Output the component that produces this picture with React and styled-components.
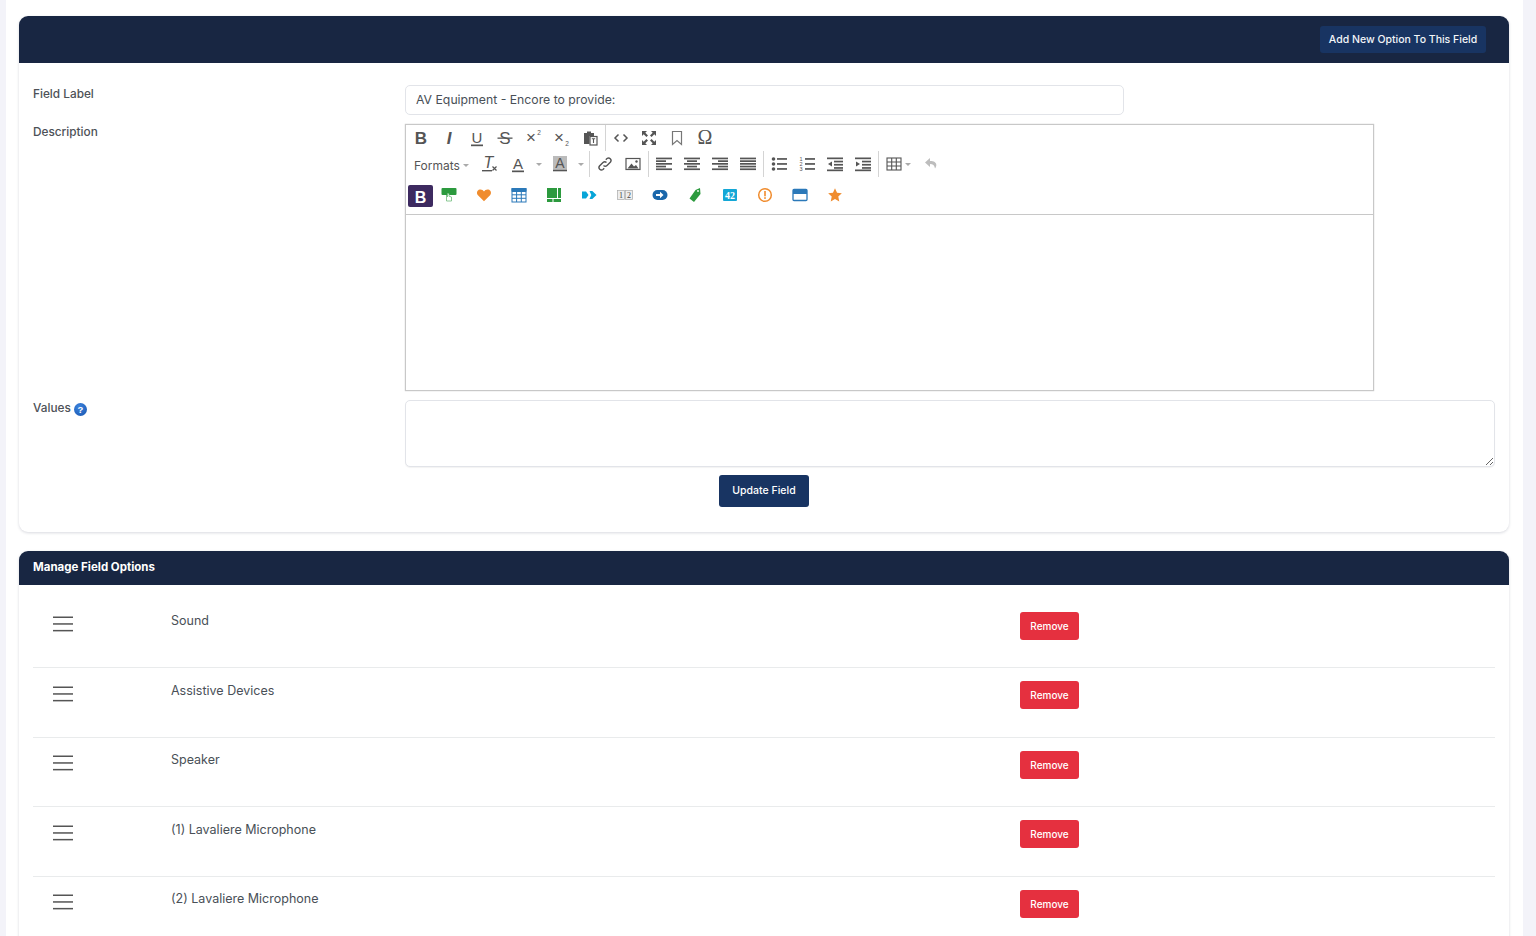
import styled, { createGlobalStyle } from "styled-components";

const GlobalStyle = createGlobalStyle`
  html, body {
    margin: 0;
    height: 936px;
    overflow: hidden;
    background: #f3f3f9;
    font-family: Inter, "Liberation Sans", sans-serif;
  }
  * { box-sizing: border-box; }
`

const ink = "#555"

const Lines = ({ rows }) => (
  <svg width="16" height="16" viewBox="0 0 16 16">
    {rows.map(([x1, x2], i) => (
      <rect key={i} x={x1} y={1.6 + i * 2.7} width={x2 - x1} height="1.7" fill={ink} />
    ))}
  </svg>
)

const Letter = ({ children, size = 17, weight = 400, italic, family = "Liberation Sans", color = ink, bar, strike, y = 15 }) => (
  <svg width="24" height="24" viewBox="-3 -3 24 24">
    <text x="9" y={y} textAnchor="middle" fontFamily={family} fontSize={size} fontWeight={weight} fontStyle={italic ? "italic" : "normal"} fill={color}>{children}</text>
    {bar && <rect x="3" y="15.500" width="12" height="1.700" fill={color} />}
    {strike && <rect x="1.500" y="8.500" width="15" height="1.300" fill={color} />}
  </svg>
)

const Script = ({ sup }) => (
  <svg width="22" height="22" viewBox="-2 -2 22 22">
    <text x="7" y="14" textAnchor="middle" fontFamily="Liberation Sans" fontSize="17" fill={ink}>×</text>
    <text x="15" y={sup ? 6 : 17} textAnchor="middle" fontFamily="Liberation Sans" fontSize="6.500" fill={ink}>2</text>
  </svg>
)

const PasteIcon = () => (
  <svg width="16" height="16" viewBox="0 0 16 16">
    <path d="M2 3h3V1.500h4V3h3v3H7.500v8H2z" fill={ink} />
    <rect x="8" y="6.500" width="7" height="8.500" fill="#fff" stroke={ink} strokeWidth="1.200" />
    <path d="M9.800 8.800h3.400M11.500 8.800v4.200" stroke={ink} strokeWidth="1.100" fill="none" />
  </svg>
)

const CodeIcon = () => (
  <svg width="16" height="16" viewBox="0 0 16 16" fill="none" stroke={ink} strokeWidth="1.500">
    <path d="M5.500 4.500 2 8l3.500 3.500M10.500 4.500 14 8l-3.500 3.500" />
  </svg>
)

const FullscreenIcon = () => (
  <svg width="16" height="16" viewBox="0 0 16 16" fill={ink}>
    <path d="M1 1h5L4.300 2.700 7 5.400 5.400 7 2.700 4.300 1 6zM15 1v5l-1.700-1.700L10.600 7 9 5.400l2.700-2.700L10 1zM1 15v-5l1.700 1.700L5.400 9 7 10.600l-2.700 2.700L6 15zM15 15h-5l1.700-1.700L9 10.600 10.600 9l2.700 2.700L15 10z" />
  </svg>
)

const BookmarkIcon = () => (
  <svg width="16" height="16" viewBox="0 0 16 16" fill="none" stroke="#777" strokeWidth="1.200">
    <path d="M3.500 1.500h9v13L8 10.500l-4.500 4z" />
  </svg>
)

const ClearIcon = () => (
  <svg width="20" height="20" viewBox="-1 -1 20 20">
    <text x="7.500" y="13" textAnchor="middle" fontFamily="Liberation Sans" fontSize="16" fontStyle="italic" fill={ink}>T</text>
    <rect x="1" y="15" width="10" height="1.400" fill={ink} />
    <path d="M11.500 11.500l4 4M15.500 11.500l-4 4" stroke={ink} strokeWidth="1.200" />
  </svg>
)

const BackColorIcon = () => (
  <svg width="18" height="18" viewBox="0 0 18 18">
    <rect x="2" y="1" width="14" height="13" fill="#bbb" />
    <text x="9" y="12.500" textAnchor="middle" fontFamily="Liberation Sans" fontSize="14" fill={ink}>A</text>
    <rect x="2" y="14.500" width="14" height="1.800" fill={ink} />
  </svg>
)

const LinkIcon = () => (
  <svg width="16" height="16" viewBox="0 0 16 16" fill="none" stroke={ink} strokeWidth="1.400">
    <path d="M6.500 9.500a2.500 2.500 0 0 0 3.500 0l3.500-3.500a2.500 2.500 0 0 0-3.500-3.500L8.800 3.700" />
    <path d="M9.500 6.500a2.500 2.500 0 0 0-3.500 0L2.500 10A2.500 2.500 0 0 0 6 13.500l1.200-1.200" />
  </svg>
)

const ImageIcon = () => (
  <svg width="16" height="16" viewBox="0 0 16 16">
    <rect x="1" y="2.500" width="14" height="11" fill="#fff" stroke={ink} strokeWidth="1.200" />
    <path d="M2.500 12.500l4-5 2.500 3 2-1.500 2.500 3.500z" fill={ink} />
    <circle cx="11.500" cy="5.500" r="1.200" fill={ink} />
  </svg>
)

const BulletIcon = () => (
  <svg width="16" height="16" viewBox="0 0 16 16" fill={ink}>
    <circle cx="2.500" cy="3" r="1.800" /><circle cx="2.500" cy="8" r="1.800" /><circle cx="2.500" cy="13" r="1.800" />
    <rect x="6" y="2.100" width="10" height="1.700" /><rect x="6" y="7.100" width="10" height="1.700" /><rect x="6" y="12.100" width="10" height="1.700" />
  </svg>
)

const NumberIcon = () => (
  <svg width="16" height="16" viewBox="0 0 16 16" fill={ink}>
    <text x="0.500" y="5" fontFamily="Liberation Sans" fontSize="5.500">1</text>
    <text x="0.500" y="10" fontFamily="Liberation Sans" fontSize="5.500">2</text>
    <text x="0.500" y="15" fontFamily="Liberation Sans" fontSize="5.500">3</text>
    <rect x="6" y="2.100" width="10" height="1.700" /><rect x="6" y="7.100" width="10" height="1.700" /><rect x="6" y="12.100" width="10" height="1.700" />
  </svg>
)

const IndentIcon = ({ out }) => (
  <svg width="16" height="16" viewBox="0 0 16 16" fill={ink}>
    <rect x="0" y="1.500" width="16" height="1.700" /><rect x="7" y="4.700" width="9" height="1.700" />
    <rect x="7" y="7.900" width="9" height="1.700" /><rect x="7" y="11.100" width="9" height="1.700" />
    <rect x="0" y="13.500" width="16" height="1.700" />
    <path d={out ? "M5 5.500v5L1 8z" : "M1 5.500v5L5 8z"} />
  </svg>
)

const TableIcon = () => (
  <svg width="16" height="16" viewBox="0 0 16 16" fill="none" stroke={ink} strokeWidth="1.100">
    <rect x="1" y="2" width="14" height="12" />
    <path d="M5.700 2v12M10.300 2v12M1 6h14M1 10h14" />
  </svg>
)

const UndoIcon = () => (
  <svg width="16" height="16" viewBox="0 0 16 16" fill="#bdbdbd">
    <path d="M7 2 2 6.500 7 11V8c3 0 4.500 1.200 5 4.500.8-1 1.300-2.200 1.300-3.500C13.300 6.500 11 5 7 5z" />
  </svg>
)

const HandButtonIcon = () => (
  <svg width="18" height="18" viewBox="0 0 18 18">
    <rect x="1.500" y="2" width="15" height="7" rx="1" fill="#2c9a3e" />
    <path d="M6.500 9v6h5v-4l-2.500-.8V7.500H7.500V11z" fill="#fff" stroke="#6dbb7a" strokeWidth="0.800" />
  </svg>
)

const HeartIcon = () => (
  <svg width="16" height="16" viewBox="0 0 18 18">
    <path d="M9 16 2.200 9.300C.2 7.200 1 3.500 4.200 2.800 6.200 2.400 8 3.400 9 5c1-1.600 2.800-2.600 4.800-2.200 3.200.7 4 4.400 2 6.500z" fill="#f08c2e" />
  </svg>
)

const GridIcon = () => (
  <svg width="16" height="16" viewBox="0 0 16 16" fill="none" stroke="#2b79b9" strokeWidth="1">
    <rect x="1" y="1.500" width="14" height="13.500" />
    <path d="M1 1.500h14v3H1z" fill="#2b79b9" />
    <path d="M5.600 4.500v10.500M10.300 4.500v10.500M1 7.800h14M1 11.300h14" />
  </svg>
)

const LayoutIcon = () => (
  <svg width="16" height="16" viewBox="0 0 16 16" fill="#2c9a3e">
    <rect x="1" y="1" width="10" height="10" /><rect x="12" y="1" width="3" height="10" />
    <rect x="1" y="12" width="5.500" height="3" /><rect x="7.500" y="12" width="7.500" height="3" />
  </svg>
)

const ChevronsIcon = () => (
  <svg width="16" height="16" viewBox="0 0 16 16" fill="#08a5d8">
    <path d="M1 4.500h4l2.500 3.500L5 11.500H1z" /><path d="M8.500 4h2.800l4.200 4-4.200 4H8.500l1.800-4z" />
  </svg>
)

const ColumnsIcon = () => (
  <svg width="16" height="16" viewBox="0 0 16 16">
    <rect x="0.500" y="3.500" width="7" height="9" fill="#eee" stroke="#aaa" strokeWidth="0.700" />
    <rect x="8.500" y="3.500" width="7" height="9" fill="#eee" stroke="#aaa" strokeWidth="0.700" />
    <text x="4" y="11" textAnchor="middle" fontFamily="Liberation Serif" fontSize="8" fill="#444">1</text>
    <text x="12" y="11" textAnchor="middle" fontFamily="Liberation Serif" fontSize="8" fill="#444">2</text>
  </svg>
)

const ArrowPillIcon = () => (
  <svg width="16" height="16" viewBox="0 0 16 16">
    <rect x="0.500" y="3" width="15" height="10" rx="5" fill="#1a67ab" />
    <path d="M4 7h4V4.800L11.500 8 8 11.200V9H4z" fill="#fff" />
  </svg>
)

const TagIcon = () => (
  <svg width="16" height="16" viewBox="0 0 16 16">
    <path d="M13 1 13.500 7 7 15 2.500 11.500 8.500 3z" fill="#2c9a3e" />
    <circle cx="11" cy="4" r="0.900" fill="#fff" />
  </svg>
)

const BadgeIcon = () => (
  <svg width="16" height="16" viewBox="0 0 16 16">
    <rect x="1" y="2" width="14" height="12" rx="1" fill="#14a7d6" />
    <text x="8" y="11.500" textAnchor="middle" fontFamily="Liberation Serif" fontSize="10" fontWeight="700" fill="#fff">42</text>
  </svg>
)

const AlertIcon = () => (
  <svg width="16" height="16" viewBox="0 0 16 16">
    <circle cx="8" cy="8" r="6.300" fill="none" stroke="#f08c2e" strokeWidth="1.500" />
    <rect x="7.200" y="4" width="1.600" height="5.300" fill="#f08c2e" />
    <rect x="7.200" y="10.200" width="1.600" height="1.700" fill="#f08c2e" />
  </svg>
)

const PanelIcon = () => (
  <svg width="16" height="16" viewBox="0 0 16 16">
    <rect x="1" y="2.500" width="14" height="11" rx="1" fill="#fff" stroke="#2b79b9" strokeWidth="1.300" />
    <rect x="1" y="2.500" width="14" height="4.500" fill="#2b79b9" />
  </svg>
)

const StarIcon = () => (
  <svg width="16" height="16" viewBox="0 0 18 18">
    <path d="m9 1.500 2.300 5 5.400.6-4 3.700 1.100 5.400L9 13.500l-4.800 2.700 1.100-5.400-4-3.700 5.400-.6z" fill="#f08c2e" />
  </svg>
)

const snippets = [HandButtonIcon, HeartIcon, GridIcon, LayoutIcon, ChevronsIcon, ColumnsIcon, ArrowPillIcon, TagIcon, BadgeIcon, AlertIcon, PanelIcon, StarIcon]

const options = ["Sound", "Assistive Devices", "Speaker", "(1) Lavaliere Microphone", "(2) Lavaliere Microphone"]

export default function App() {
  return (
    <Page>
      <GlobalStyle />
      <Card>
        <FieldHeader>
          <HeaderButton>Add New Option To This Field</HeaderButton>
        </FieldHeader>
        <FieldForm>
          <Label $top={1}>Field Label</Label>
          <TextInput defaultValue="AV Equipment - Encore to provide:" />

          <Label>Description</Label>
          <Editor>
            <Toolbar>
              <ToolRow>
                <ToolBtn><Letter weight={700}>B</Letter></ToolBtn>
                <ToolBtn><Letter italic weight={700}>I</Letter></ToolBtn>
                <ToolBtn><Letter bar size={15} y={13.500}>U</Letter></ToolBtn>
                <ToolBtn><Letter strike>S</Letter></ToolBtn>
                <ToolBtn><Script sup /></ToolBtn>
                <ToolBtn><Script /></ToolBtn>
                <PasteBtn><PasteIcon /></PasteBtn>
                <Divider />
                <ToolBtn><CodeIcon /></ToolBtn>
                <ToolBtn><FullscreenIcon /></ToolBtn>
                <ToolBtn><BookmarkIcon /></ToolBtn>
                <ToolBtn><Letter size={20} y={15} family="Liberation Serif">Ω</Letter></ToolBtn>
              </ToolRow>
              <ToolRow>
                <FormatsBtn>Formats<Caret /></FormatsBtn>
                <ToolBtn><ClearIcon /></ToolBtn>
                <ToolBtn><Letter bar size={15} y={14}>A</Letter></ToolBtn>
                <CaretBtn><Caret /></CaretBtn>
                <ToolBtn><BackColorIcon /></ToolBtn>
                <CaretBtn><Caret /></CaretBtn>
                <Divider />
                <ToolBtn><LinkIcon /></ToolBtn>
                <ToolBtn><ImageIcon /></ToolBtn>
                <Divider />
                <ToolBtn><Lines rows={[[0, 16], [0, 10], [0, 16], [0, 10], [0, 16]]} /></ToolBtn>
                <ToolBtn><Lines rows={[[0, 16], [3, 13], [0, 16], [3, 13], [0, 16]]} /></ToolBtn>
                <ToolBtn><Lines rows={[[0, 16], [6, 16], [0, 16], [6, 16], [0, 16]]} /></ToolBtn>
                <ToolBtn><Lines rows={[[0, 16], [0, 16], [0, 16], [0, 16], [0, 16]]} /></ToolBtn>
                <Divider />
                <ToolBtn><BulletIcon /></ToolBtn>
                <ToolBtn><NumberIcon /></ToolBtn>
                <ToolBtn><IndentIcon out /></ToolBtn>
                <ToolBtn><IndentIcon /></ToolBtn>
                <Divider />
                <TableBtn><TableIcon /><Caret /></TableBtn>
                <ToolBtn><UndoIcon /></ToolBtn>
              </ToolRow>
              <SnippetRow>
                <BootstrapMark>B</BootstrapMark>
                {snippets.map((Icon, i) => <SnippetBtn key={i}><Icon /></SnippetBtn>)}
              </SnippetRow>
            </Toolbar>
            <EditArea />
          </Editor>

          <Label>Values <HelpDot>?</HelpDot></Label>
          <ValuesArea />

          <SubmitRow>
            <PrimaryButton>Update Field</PrimaryButton>
          </SubmitRow>
        </FieldForm>
      </Card>

      <Card>
        <OptionsHeader>Manage Field Options</OptionsHeader>
        <OptionList>
          {options.map((o) => (
            <OptionRow key={o}>
              <DragHandle>
                <svg width="20" height="16" viewBox="0 0 20 16" fill="#555">
                  <rect y="0.500" width="20" height="1.500" />
                  <rect y="7.200" width="20" height="1.500" />
                  <rect y="13.900" width="20" height="1.500" />
                </svg>
              </DragHandle>
              <OptionName>{o}</OptionName>
              <RemoveButton>Remove</RemoveButton>
            </OptionRow>
          ))}
        </OptionList>
      </Card>
    </Page>
  )
}

const Page = styled.div`
  margin-left: 6px;
  width: 1517px;
  height: 936px;
  overflow: hidden;
  background: #fff;
  padding: 16px 14px 0 13px;
  display: flex;
  flex-direction: column;
  gap: 19px;
`

const Card = styled.section`
  background: #fff;
  border-radius: 9px;
  box-shadow: 0 1px 3px rgba(40, 45, 80, 0.18);
  flex-shrink: 0;
`

const FieldHeader = styled.header`
  height: 46.500px;
  background: #182642;
  border-radius: 9px 9px 0 0;
  display: flex;
  justify-content: flex-end;
  align-items: center;
  padding-right: 23px;
`

const HeaderButton = styled.button`
  width: 166px;
  height: 27px;
  border: 0;
  border-radius: 3px;
  background: #183462;
  color: #f2f4f8;
  font: 500 10.5px Inter, sans-serif;
  padding: 0;
`

const FieldForm = styled.div`
  display: grid;
  grid-template-columns: 372px 1fr;
  row-gap: 9px;
  padding: 22.500px 14px 25px;
  align-items: start;
`

const Label = styled.label`
  font-size: 11.8px;
  line-height: 16px;
  font-weight: 500;
  color: #4d5157;
  display: flex;
  align-items: center;
  gap: 3px;
  margin-top: ${(p) => p.$top || 0}px;
`

const TextInput = styled.input`
  width: 719px;
  height: 30px;
  border: 1px solid #e2e4e9;
  border-radius: 5px;
  padding: 0 10px 2px;
  font: 400 12.25px Inter, sans-serif;
  color: #495057;
  outline: none;
`

const Editor = styled.div`
  width: 969px;
  height: 267px;
  border: 1px solid #c8c8c8;
  box-shadow: 0 0 1px #bbb;
  display: flex;
  flex-direction: column;
`

const Toolbar = styled.div`
  height: 90px;
  padding: 0 1px 4px;
  border-bottom: 1px solid #c8c8c8;
  flex-shrink: 0;
`

const ToolRow = styled.div`
  display: flex;
  height: 26px;
  align-items: stretch;
`

const ToolBtn = styled.span`
  width: 28px;
  display: flex;
  align-items: center;
  justify-content: center;
  flex-shrink: 0;
`

const PasteBtn = styled(ToolBtn)`
  width: 29px;
  padding-left: 1px;
`

const FormatsBtn = styled.span`
  width: 69px;
  display: flex;
  align-items: center;
  gap: 3px;
  padding: 2px 0 0 7px;
  font-size: 12px;
  color: #555;
`

const CaretBtn = styled.span`
  width: 14px;
  display: flex;
  align-items: center;
  justify-content: center;
`

const TableBtn = styled.span`
  width: 37px;
  display: flex;
  align-items: center;
  gap: 3px;
  padding-left: 6px;
`

const Caret = styled.i`
  width: 0;
  height: 0;
  border-left: 3px solid transparent;
  border-right: 3px solid transparent;
  border-top: 3px solid #aaa;
`

const Divider = styled.span`
  width: 1px;
  margin: 0 1px;
  background: #d4d4d4;
  flex-shrink: 0;
`

const SnippetRow = styled.div`
  display: flex;
  align-items: center;
  height: 28px;
  margin-top: 5px;
  padding-left: 1px;
`

const BootstrapMark = styled.span`
  width: 25px;
  height: 22px;
  margin-right: -1.500px;
  background: #3d2a60;
  border-radius: 2px;
  color: #fff;
  font: 700 16px/26px "Liberation Sans", sans-serif;
  text-align: center;
`

const SnippetBtn = styled.span`
  width: 35.100px;
  height: 28px;
  display: flex;
  align-items: center;
  justify-content: center;
  flex-shrink: 0;
  margin-top: -2px;
`

const EditArea = styled.div`
  flex: 1;
  background: #fff;
`

const HelpDot = styled.span`
  width: 13px;
  height: 13px;
  border-radius: 50%;
  background: radial-gradient(circle at 40% 30%, #3b82dc, #1856b0);
  color: #fff;
  font: 700 9.5px/13px "Liberation Sans", sans-serif;
  text-align: center;
  margin-top: 2px;
`

const ValuesArea = styled.textarea`
  display: block;
  width: 100%;
  height: 67px;
  border: 1px solid #e2e4e9;
  border-radius: 5px;
  box-shadow: 0 1px 1px rgba(0, 0, 0, 0.05);
  outline: none;
  resize: vertical;
`

const SubmitRow = styled.div`
  grid-column: 1 / -1;
  display: flex;
  margin-top: -1px;
  padding-left: 686px;
`

const PrimaryButton = styled.button`
  width: 90px;
  height: 32px;
  border: 0;
  border-radius: 3px;
  background: #183462;
  color: #fff;
  font: 500 10.5px Inter, sans-serif;
  padding: 0 0 2px;
`

const OptionsHeader = styled.header`
  height: 33.500px;
  background: #182642;
  border-radius: 9px 9px 0 0;
  color: #fff;
  font-size: 11.5px;
  font-weight: 700;
  line-height: 33.500px;
  padding-left: 14px;
`

const OptionList = styled.div`
  padding: 14px 14px 0;
`

const OptionRow = styled.div`
  display: grid;
  grid-template-columns: 138px 849px 59px;
  height: 69.500px;
  padding-top: 13px;
  border-bottom: 1px solid #e9ebec;
  align-items: start;
  &:last-child { border-bottom: 0; }
`

const DragHandle = styled.span`
  display: block;
  padding: 4.500px 0 0 20px;
  line-height: 0;
`

const OptionName = styled.span`
  font-size: 12.5px;
  line-height: 16px;
  color: #495057;
  margin-top: 1.500px;
`

const RemoveButton = styled.button`
  width: 59px;
  height: 28px;
  border: 0;
  border-radius: 3px;
  background: #e5303f;
  color: #fff;
  font: 500 10px Inter, sans-serif;
  padding: 0;
`
